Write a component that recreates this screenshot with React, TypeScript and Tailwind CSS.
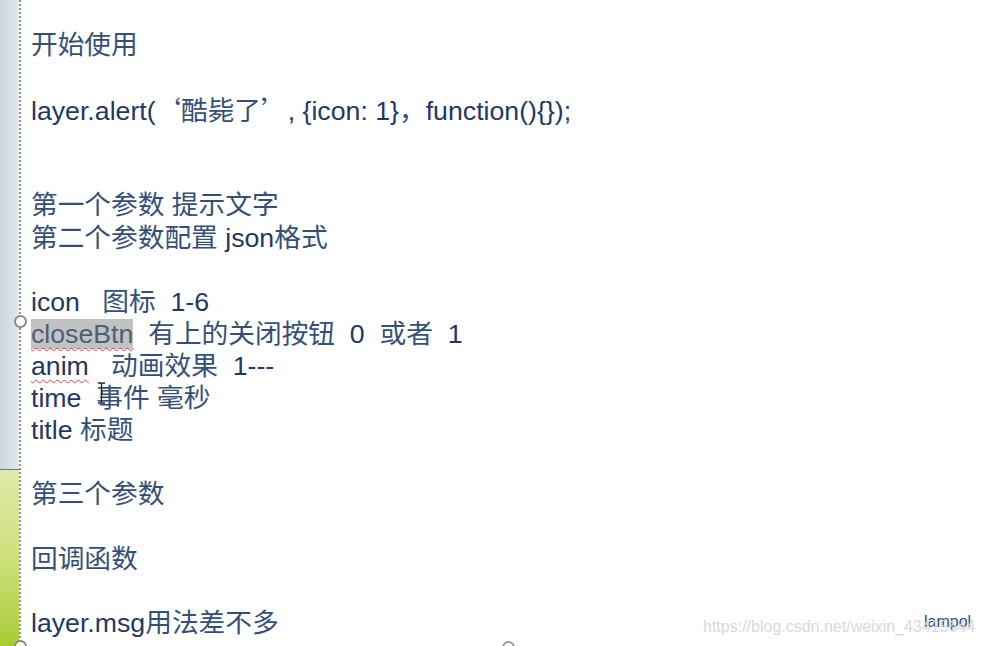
import type { ReactNode } from 'react';

function Zh({ children }: { children: ReactNode }) {
  return <span className="text-[#34507a]">{children}</span>;
}

function Line({ children }: { children?: ReactNode }) {
  return <div className="h-[32.1px] whitespace-pre">{children}</div>;
}

export default function App() {
  return (
    <div className="relative flex h-[646px] w-[984px] overflow-hidden bg-white">
      {/* slide thumbnail strip */}
      <aside className="flex w-[21px] flex-col border-r-2 border-dotted border-[#8196b0]">
        <div className="h-[470px] bg-gradient-to-r from-[#cdd6dc] to-[#e2e8ec] border-b border-[#687c94]" />
        <div className="flex-1 bg-gradient-to-b from-[#dfeaa8] via-[#cde07a] to-[#aacb30]" />
      </aside>

      <main className="flex-1 pl-[10px] pt-[29px] font-['Liberation_Sans','Noto_Sans_CJK_SC',sans-serif] text-[26.7px] leading-[32.1px] text-[#1f3864]">
        <Line><Zh>开始使用</Zh></Line>
        <Line />
        <Line>
          layer.alert(<span className="ml-[12px] font-['Noto_Sans_CJK_SC',sans-serif] text-[#34507a]">‘酷毙了’</span>, {'{icon: 1}'}<Zh>，</Zh>function(){'{}'});
        </Line>
        <Line />
        <Line />
        <Line><Zh>第一个参数 提示文字</Zh></Line>
        <Line><Zh>第二个参数配置 </Zh>json<Zh>格式</Zh></Line>
        <Line />
        <Line>icon   <Zh>图标</Zh>  1-6</Line>
        <Line>
          <span className="bg-[#c2c2c2] text-[#4c5e78] underline decoration-wavy decoration-[#e04040] decoration-1 underline-offset-[4px]">closeBtn</span>
          {'  '}<Zh>有上的关闭按钮</Zh>  0  <Zh>或者</Zh>  1
        </Line>
        <Line>
          <span className="underline decoration-wavy decoration-[#e04040] decoration-1 underline-offset-[4px]">anim</span>
          {'   '}<Zh>动画效果</Zh>  1---
        </Line>
        <Line>time  <Zh>事件 毫秒</Zh></Line>
        <Line>title <Zh>标题</Zh></Line>
        <Line />
        <Line><Zh>第三个参数</Zh></Line>
        <Line />
        <Line><Zh>回调函数</Zh></Line>
        <Line />
        <Line>layer.msg<Zh>用法差不多</Zh></Line>
      </main>

      {/* selection handles */}
      <div className="absolute left-[14px] top-[315px] h-[13px] w-[13px] rounded-full border-2 border-[#8a8a8a] bg-white" />
      <div className="absolute left-[14px] top-[640px] h-[13px] w-[13px] rounded-full border-2 border-[#8a8a8a] bg-white" />
      <div className="absolute left-[502px] top-[641px] h-[13px] w-[13px] rounded-full border-2 border-[#9a9a9a] bg-white" />

      {/* I-beam cursor */}
      <svg className="absolute left-[97px] top-[382px]" width="9" height="22" viewBox="0 0 9 22">
        <path d="M1 1h2.5c.6 0 1 .4 1 1v18c0 .6.4 1 1 1H8M8 1H5.5c-.6 0-1 .4-1 1M4.5 20c0 .6-.4 1-1 1H1" fill="none" stroke="#222" strokeWidth="1.3" />
      </svg>

      {/* footer label and watermark */}
      <div className="absolute left-[924px] top-[612px] font-['Liberation_Sans',sans-serif] text-[16px] leading-[20px] text-[#2b4a78]">
        lampol
      </div>
      <div className="absolute left-[703px] top-[617px] font-['Liberation_Sans',sans-serif] text-[16px] leading-[20px] text-[#d9d9d9]">
        https://blog.csdn.net/weixin_43415644
      </div>
    </div>
  );
}
